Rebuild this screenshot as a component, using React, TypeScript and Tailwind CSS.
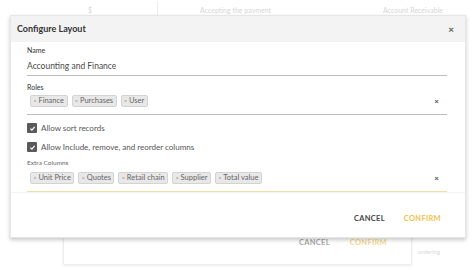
import React from "react";

const roles = ["Finance", "Purchases", "User"];
const extraColumns = ["Unit Price", "Quotes", "Retail chain", "Supplier", "Total value"];

function Chip({ label }: { label: string }) {
    return (
        <span className="flex h-[12px] items-center gap-[2px] rounded-[2px] border border-[#d3d3d3] bg-[#e8e8e8] px-[2.5px] text-[7.5px] leading-none text-[#666]">
            <span className="text-[5px] text-[#888]">×</span>
            {label}
        </span>
    );
}

function Check({ label }: { label: string }) {
    return (
        <div className="flex h-[10px] items-center gap-[4px]">
            <span className="flex h-[10px] w-[10px] items-center justify-center rounded-[1px] bg-[#5a5a5a]">
                <svg width="7" height="7" viewBox="0 0 10 10">
                    <path d="M2 5.2 L4.2 7.3 L8 2.8" stroke="white" strokeWidth="1.8" fill="none" />
                </svg>
            </span>
            <span className="text-[8px] leading-none text-[#555]">{label}</span>
        </div>
    );
}

export default function App(): React.JSX.Element {
    return (
        <div className="relative h-[270px] w-[474px] overflow-hidden bg-white font-['Lato',sans-serif]">
            {/* faded table behind */}
            <div className="flex h-[20px] items-center text-[7px] text-[#d6d6d6]">
                <span className="w-[157px] pl-[88px]">$</span>
                <span className="h-[18px] w-px bg-[#ececec]" />
                <span className="w-[225px] pl-[42px]">Accepting the payment</span>
                <span>Account Receivable</span>
            </div>

            {/* dialog underneath */}
            <div className="absolute bottom-[5px] left-[63px] flex h-[60px] w-[349px] items-end justify-end gap-[20px] rounded-[2px] border border-[#ededed] bg-white px-[24px] pb-[16px] shadow-[0_1px_3px_rgba(0,0,0,0.08)]">
                <span className="text-[7.5px] font-bold tracking-[0.3px] text-[#a8a8a8]">CANCEL</span>
                <span className="text-[7.5px] font-bold tracking-[0.3px] text-[#f4d891]">CONFIRM</span>
            </div>
            <span className="absolute bottom-[14px] left-[418px] text-[6px] text-[#dadada]">ordering</span>

            {/* main dialog */}
            <div className="absolute left-[10px] top-[15px] flex h-[223px] w-[456px] flex-col border border-[#e6e6e6] bg-white shadow-[0_2px_4px_rgba(0,0,0,0.22)]">
                <div className="flex h-[26px] items-center justify-between bg-[#f3f3f3] pl-[6px] pr-[11px]">
                    <span className="text-[9px] font-bold text-[#333]">Configure Layout</span>
                    <span className="text-[10px] font-black leading-none text-[#666]">×</span>
                </div>

                <div className="flex flex-col pl-[16px] pr-[18px] pt-[4px]">
                    <span className="text-[7px] leading-[8px] text-[#333]">Name</span>
                    <div className="mt-[4px] flex h-[18px] items-center border-b border-[#bdbdbd] text-[8.5px] text-[#4a4a4a]">
                        Accounting and Finance
                    </div>

                    <span className="mt-[7px] text-[7px] leading-[8px] text-[#333]">Roles</span>
                    <div className="flex items-center border-b border-[#bdbdbd] pb-[7px] pl-[3px] pr-[8px] pt-[4px]">
                        <div className="flex flex-1 gap-[4px]">
                            {roles.map((r) => (
                                <Chip key={r} label={r} />
                            ))}
                        </div>
                        <span className="text-[8px] font-black leading-none text-[#555]">×</span>
                    </div>

                    <div className="mt-[8px] flex flex-col gap-[9px]">
                        <Check label="Allow sort records" />
                        <Check label="Allow Include, remove, and reorder columns" />
                    </div>

                    <span className="mt-[7px] text-[6.5px] leading-[8px] text-[#666]">Extra Columns</span>
                    <div className="flex items-center border-b border-[#f1dfa6] pb-[7px] pl-[3px] pr-[8px] pt-[5px]">
                        <div className="flex flex-1 gap-[4px]">
                            {extraColumns.map((c) => (
                                <Chip key={c} label={c} />
                            ))}
                        </div>
                        <span className="text-[8px] font-black leading-none text-[#555]">×</span>
                    </div>
                </div>

                <div className="mt-auto flex h-[45px] items-center justify-end gap-[19px] border-t border-[#f4f4f4] pr-[24px] pt-[7px]">
                    <span className="text-[7.5px] font-bold tracking-[0.3px] text-[#444]">CANCEL</span>
                    <span className="text-[7.5px] font-bold tracking-[0.3px] text-[#f0c24b]">CONFIRM</span>
                </div>
            </div>
        </div>
    );
}
